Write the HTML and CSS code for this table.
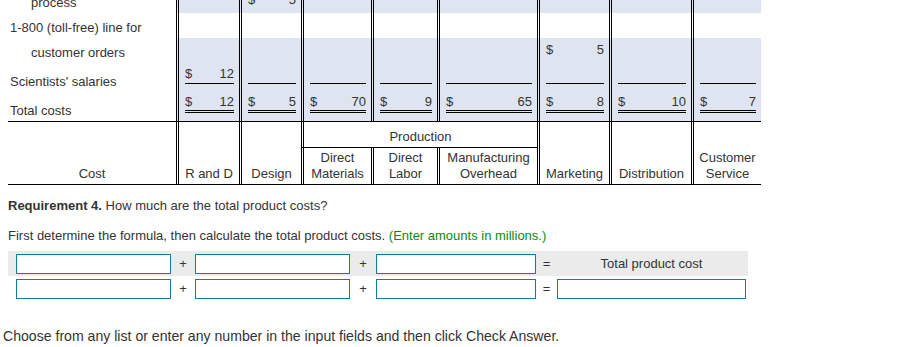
FILE: index.html
```html
<!DOCTYPE html>
<html>
<head>
<meta charset="utf-8">
<link rel="stylesheet" href="styles.css">
</head>
<body>
<div class="page">
  <table class="costs">
    <colgroup>
      <col class="w-cost"><col class="w-rd"><col class="w-design"><col class="w-dm"><col class="w-dl"><col class="w-mo"><col class="w-mkt"><col class="w-dist"><col class="w-cs">
    </colgroup>
    <tbody>
      <tr class="r25 shade">
        <td class="lbl ind">process</td>
        <td class="val"></td>
        <td class="val"><div class="amt"><span>$</span><span>5</span></div></td>
        <td class="val"></td>
        <td class="val"></td>
        <td class="val"></td>
        <td class="val"></td>
        <td class="val"></td>
        <td class="val"></td>
      </tr>
      <tr class="r25">
        <td class="lbl">1-800 (toll-free) line for</td>
        <td class="val"></td>
        <td class="val"></td>
        <td class="val"></td>
        <td class="val"></td>
        <td class="val"></td>
        <td class="val"></td>
        <td class="val"></td>
        <td class="val"></td>
      </tr>
      <tr class="r25 shade">
        <td class="lbl ind">customer orders</td>
        <td class="val"></td>
        <td class="val"></td>
        <td class="val"></td>
        <td class="val"></td>
        <td class="val"></td>
        <td class="val"><div class="amt"><span>$</span><span>5</span></div></td>
        <td class="val"></td>
        <td class="val"></td>
      </tr>
      <tr class="rsub shade">
        <td class="lbl">Scientists' salaries</td>
        <td class="val"><div class="amt sub"><span>$</span><span>12</span></div></td>
        <td class="val"><div class="amt sub"></div></td>
        <td class="val"><div class="amt sub"></div></td>
        <td class="val"><div class="amt sub"></div></td>
        <td class="val"><div class="amt sub"></div></td>
        <td class="val"><div class="amt sub"></div></td>
        <td class="val"><div class="amt sub"></div></td>
        <td class="val"><div class="amt sub"></div></td>
      </tr>
      <tr class="rtot shade">
        <td class="lbl">Total costs</td>
        <td class="val"><div class="amt tot"><span>$</span><span>12</span></div></td>
        <td class="val"><div class="amt tot"><span>$</span><span>5</span></div></td>
        <td class="val"><div class="amt tot"><span>$</span><span>70</span></div></td>
        <td class="val"><div class="amt tot"><span>$</span><span>9</span></div></td>
        <td class="val"><div class="amt tot"><span>$</span><span>65</span></div></td>
        <td class="val"><div class="amt tot"><span>$</span><span>8</span></div></td>
        <td class="val"><div class="amt tot"><span>$</span><span>10</span></div></td>
        <td class="val"><div class="amt tot"><span>$</span><span>7</span></div></td>
      </tr>
      <tr class="h1">
        <th class="hd" rowspan="2">Cost</th>
        <th class="hd bl" rowspan="2">R and D</th>
        <th class="hd bl" rowspan="2">Design</th>
        <th class="hd bl prod" colspan="3">Production</th>
        <th class="hd bl" rowspan="2">Marketing</th>
        <th class="hd bl" rowspan="2">Distribution</th>
        <th class="hd bl" rowspan="2">Customer<br>Service</th>
      </tr>
      <tr class="h2">
        <th class="hd bl">Direct<br>Materials</th>
        <th class="hd bl">Direct<br>Labor</th>
        <th class="hd bl">Manufacturing<br>Overhead</th>
      </tr>
    </tbody>
  </table>

  <p class="req"><b>Requirement 4.</b> How much are the total product costs?</p>
  <p class="instr">First determine the formula, then calculate the total product costs. <span class="note">(Enter amounts in millions.)</span></p>

  <div class="formula">
    <div class="frow head">
      <input class="fld" type="text">
      <span class="op">+</span>
      <input class="fld" type="text">
      <span class="op">+</span>
      <input class="fld" type="text">
      <span class="op">=</span>
      <span class="rlabel">Total product cost</span>
    </div>
    <div class="frow">
      <input class="fld" type="text">
      <span class="op">+</span>
      <input class="fld" type="text">
      <span class="op">+</span>
      <input class="fld" type="text">
      <span class="op">=</span>
      <input class="fld" type="text">
    </div>
  </div>
</div>
<p class="foot">Choose from any list or enter any number in the input fields and then click Check Answer.</p>
</body>
</html>
```

FILE: styles.css
```css
* { box-sizing: border-box; }
html, body { margin: 0; padding: 0; background: #fff; }
body {
  font-family: "Liberation Sans", Arial, sans-serif;
  font-size: 13px;
  color: #333;
  overflow: hidden;
}
.page { padding: 0 8px; margin-top: -12px; }

.costs {
  border-collapse: separate;
  border-spacing: 0;
  table-layout: fixed;
  width: 753px;
}
.w-cost { width: 168px; }
.w-rd { width: 63px; }
.w-design { width: 62px; }
.w-dm { width: 70px; }
.w-dl { width: 66px; }
.w-mo { width: 100px; }
.w-mkt { width: 72px; }
.w-dist { width: 82px; }
.w-cs { width: 70px; }

.r25 { height: 25px; }
.rsub { height: 29px; }
.rtot { height: 30px; }
.h1 { height: 26px; }
.h2 { height: 37px; }

.lbl {
  padding: 0 0 2px 2px;
  vertical-align: bottom;
  line-height: 16px;
  white-space: nowrap;
  text-align: left;
}
.lbl.ind { padding-left: 23px; }

.val {
  border-left: 3px double #000;
  vertical-align: top;
  padding: 4px 5px 0 6px;
}
.shade .val { background: #dfe5f0; }
.rsub .val { padding-top: 3px; }
.rtot .val { padding-top: 2px; }
.rtot td { border-bottom: 1px solid #000; }

.amt {
  display: flex;
  justify-content: space-between;
  line-height: 16px;
  height: 16px;
}
.amt.sub { height: 18px; padding-bottom: 1px; border-bottom: 1px solid #000; }
.amt.tot { height: 19px; border-bottom: 3px double #000; }

.hd {
  font-weight: normal;
  text-align: center;
  vertical-align: bottom;
  line-height: 16px;
  padding: 0 1px 2px;
  border-bottom: 1px solid #000;
  white-space: nowrap;
}
.hd.bl { border-left: 3px double #000; }
.hd.prod { padding-bottom: 2px; }

.req { margin: 13px 0 0; line-height: 16px; }
.req b { font-weight: bold; }
.instr { margin: 14px 0 0; line-height: 16px; }
.note { color: #0a8a0a; }

.formula { margin-top: 7px; width: 740px; }
.frow {
  display: grid;
  grid-template-columns: 155px 24px 155px 26px 160px 21px 189px;
  padding: 3px 2px 2px 8px;
  align-items: center;
}
.frow.head { background: #ebebeb; }
.fld {
  display: block;
  width: 100%;
  height: 20px;
  margin: 0;
  padding: 0 3px;
  border: 1px solid #137c9c;
  border-radius: 0;
  background: #fff;
  font: inherit;
  outline: none;
}
.op { text-align: center; line-height: 16px; }
.rlabel { text-align: center; line-height: 16px; }

.foot {
  margin: 27px 0 0;
  padding-left: 3px;
  font-size: 14.1px;
  line-height: 16px;
}
```
